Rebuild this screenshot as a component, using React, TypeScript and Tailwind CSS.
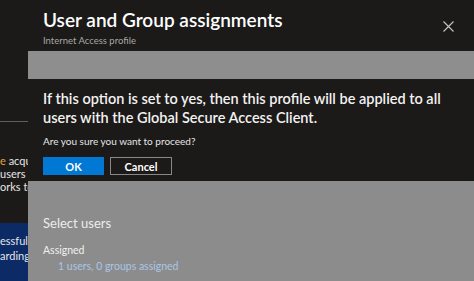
import React from 'react';

const font = { fontFamily: 'Lato, "Noto Sans", sans-serif' };

export default function App() {
  return (
    <div
      className="w-[474px] h-[281px] overflow-hidden bg-[#1b1a19] flex text-white"
      style={font}
    >
      {/* page behind the blade */}
      <div className="w-[28px] shrink-0 flex flex-col overflow-hidden">
        <div className="h-[121px] shrink-0" />
        <div className="h-px bg-[#5f5e5d] shrink-0" />
        <div className="h-[32px] shrink-0" />
        <div className="flex flex-col text-[11px] leading-[13px] whitespace-nowrap text-[#e6e6e6]">
          <span><span className="text-[#e3a23c]">e</span> acqui</span>
          <span>users c</span>
          <span>orks to</span>
        </div>
        <div className="mt-[30px] flex-1 bg-[#0b2a66] pt-[10px] flex flex-col text-[11px] leading-[15px] whitespace-nowrap text-[#e6e6e6]">
          <span>essfully</span>
          <span>arding</span>
        </div>
      </div>

      {/* blade */}
      <div className="flex-1 flex flex-col">
        <div className="h-[51px] shrink-0 flex items-start justify-between pl-[15px] pr-[20px] pt-[7px]">
          <div className="flex flex-col">
            <h1 className="text-[19px] leading-[25px] font-semibold">User and Group assignments</h1>
            <span className="text-[9.5px] leading-[13px] text-[#a8a6a4] mt-[2px]">Internet Access profile</span>
          </div>
          <svg width="11" height="11" viewBox="0 0 11 11" className="mt-[14px] text-[#c8c6c4]">
            <path d="M0.5 0.5 L10.5 10.5 M10.5 0.5 L0.5 10.5" stroke="currentColor" strokeWidth="1.1" />
          </svg>
        </div>

        <div className="h-[28px] shrink-0 bg-[#8e8e8e]" />

        <div className="h-[102px] shrink-0 bg-[#1b1a19] pl-[15px] pr-[10px] pt-[10px] flex flex-col">
          <p className="text-[14.5px] leading-[19px] font-semibold text-[#f3f2f1]">
            If this option is set to yes, then this profile will be applied to all users with the Global Secure Access Client.
          </p>
          <p className="text-[10px] leading-[14px] text-[#e6e6e6] mt-[7px]">Are you sure you want to proceed?</p>
          <div className="flex gap-[6px] mt-[9px]">
            <button className="w-[61px] h-[18px] bg-[#0078d4] text-[11px] font-bold leading-none">OK</button>
            <button className="w-[62px] h-[18px] border border-[#8a8886] text-[11px] font-bold leading-none">Cancel</button>
          </div>
        </div>

        <div className="flex-1 bg-[#8c8c8c] pl-[15px] pt-[33px] flex flex-col">
          <span className="text-[13px] leading-[18px] text-[#ececec]">Select users</span>
          <span className="text-[10.5px] leading-[14px] text-[#f0f0f0] mt-[11px]">Assigned</span>
          <span className="text-[10.5px] leading-[14px] text-[#a9c6e6] ml-[15px] mt-[2px]">1 users, 0 groups assigned</span>
        </div>
      </div>
    </div>
  );
}
